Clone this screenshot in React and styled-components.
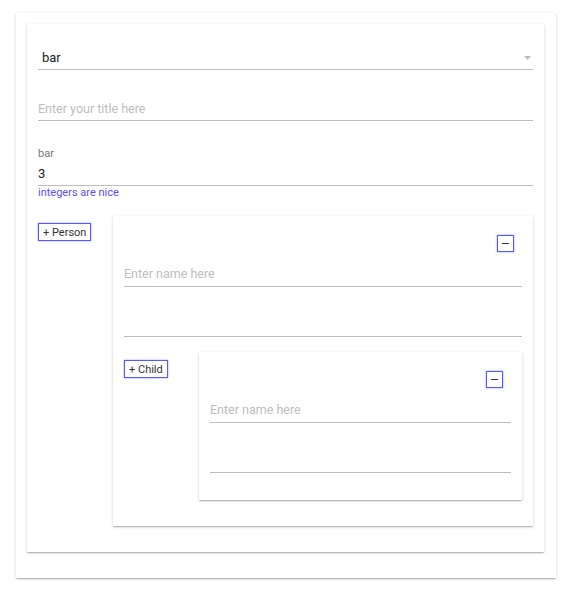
import React from 'react'
import styled, { createGlobalStyle } from 'styled-components'

const GlobalStyle = createGlobalStyle`
  body {
    margin: 0;
    background: #fff;
    font-family: Roboto, "Liberation Sans", Arial, sans-serif;
    color: #222;
  }
`

const cardShadow = `
  box-shadow: 0 1px 3px rgba(0, 0, 0, 0.16), 0 1px 1px rgba(0, 0, 0, 0.1), 0 2px 1px -1px rgba(0, 0, 0, 0.1);
`

const Page = styled.div`
  padding: 13px 15px 15px 16px;
`

const OuterCard = styled.div`
  background: #fff;
  padding: 11px 12px 26px 11px;
  ${cardShadow}
`

const FormCard = styled.div`
  background: #fff;
  padding: 22px 11px 26px 11px;
  ${cardShadow}
`

const SelectBox = styled.div`
  display: flex;
  align-items: center;
  justify-content: space-between;
  height: 24px;
  box-sizing: border-box;
  border-bottom: 1px solid #bdbdbd;
  padding: 0 2px 0 4px;
  font-size: 13px;
  color: #222;
`

const Input = styled.input`
  display: block;
  width: 100%;
  box-sizing: border-box;
  height: ${({ $h }) => $h || 24}px;
  margin: ${({ $mt }) => $mt || 0}px 0 0 0;
  padding: 0;
  border: none;
  border-bottom: 1px solid #bdbdbd;
  outline: none;
  background: transparent;
  font-family: inherit;
  font-size: 13px;
  color: #222;

  &::placeholder {
    font-size: 12.5px;
    color: #bdbdbd;
  }
`

const Label = styled.div`
  margin-top: 26px;
  font-size: 11px;
  line-height: 14px;
  color: #777;
`

const Helper = styled.div`
  font-size: 11px;
  line-height: 14px;
  color: #5a4ef8;
`

const Row = styled.div`
  display: flex;
  align-items: flex-start;
  margin-top: ${({ $mt }) => $mt}px;
`

const AddColumn = styled.div`
  display: flex;
  align-items: flex-start;
  width: 75px;
  flex-shrink: 0;
  padding-top: ${({ $pt }) => $pt}px;
`

const OutlineButton = styled.button`
  display: flex;
  align-items: center;
  justify-content: center;
  box-sizing: border-box;
  height: ${({ $size }) => $size || 18}px;
  min-width: ${({ $size }) => $size || 0}px;
  margin: 0;
  padding: ${({ $size }) => ($size ? 0 : '0 4px')};
  border: 1px solid #5757ff;
  box-shadow: 0 0 2px rgba(87, 87, 255, 0.55);
  background: #fff;
  font-family: inherit;
  font-size: 11px;
  line-height: 1;
  color: #333;
  cursor: pointer;
`

const MinusLine = styled.span`
  display: block;
  width: 7px;
  height: 1px;
  background: #333;
`

const ItemCard = styled.div`
  flex: 1;
  background: #fff;
  padding: 19px 11px ${({ $pb }) => $pb}px 11px;
  ${cardShadow}
`

const CardHeader = styled.div`
  display: flex;
  justify-content: flex-end;
  padding-right: 8px;
`

const Arrow = () => (
  <svg width="7" height="4" viewBox="0 0 7 4">
    <path d="M0 0 L7 0 L3.5 4 Z" fill="#bdbdbd" />
  </svg>
)

const Entry = ({ pb, children }) => (
  <ItemCard $pb={pb}>
    <CardHeader>
      <OutlineButton $size={17}>
        <MinusLine />
      </OutlineButton>
    </CardHeader>
    <Input $h={26} $mt={9} placeholder="Enter name here" />
    <Input $h={26} $mt={24} />
    {children}
  </ItemCard>
)

export default function App() {
  return (
    <Page>
      <GlobalStyle />
      <OuterCard>
        <FormCard>
          <SelectBox>
            <span>bar</span>
            <Arrow />
          </SelectBox>
          <Input $mt={27} placeholder="Enter your title here" />
          <Label>bar</Label>
          <Input $h={25} defaultValue="3" />
          <Helper>integers are nice</Helper>
          <Row $mt={16}>
            <AddColumn $pt={7}>
              <OutlineButton>+ Person</OutlineButton>
            </AddColumn>
            <Entry pb={26}>
              <Row $mt={15}>
                <AddColumn $pt={8}>
                  <OutlineButton>+ Child</OutlineButton>
                </AddColumn>
                <Entry pb={27} />
              </Row>
            </Entry>
          </Row>
        </FormCard>
      </OuterCard>
    </Page>
  )
}
